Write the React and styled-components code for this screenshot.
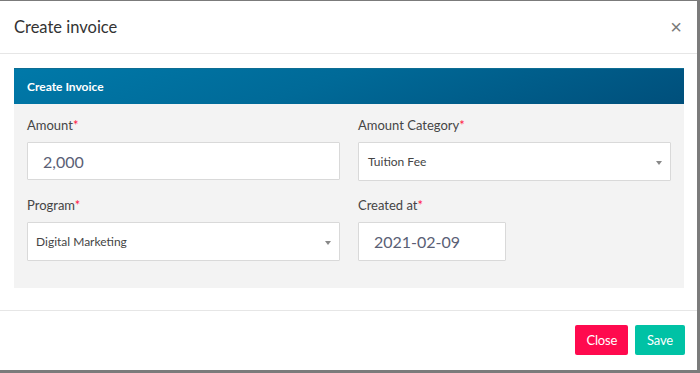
import React from "react";
import styled, { createGlobalStyle } from "styled-components";

const Global = createGlobalStyle`
  html, body { margin: 0; padding: 0; }
  body {
    background: #7b7b7b;
    font-family: "Lato", "Noto Sans", sans-serif;
    width: 700px;
    height: 373px;
    overflow: hidden;
  }
  * { box-sizing: border-box; }
`;

const Modal = styled.div`
  margin-top: 1px;
  width: 697px;
  height: 369px;
  background: #fff;
  display: flex;
  flex-direction: column;
`;

const Header = styled.div`
  height: 53px;
  border-bottom: 1px solid #e6e6e6;
  display: flex;
  align-items: center;
  justify-content: space-between;
  padding: 0 15px 0 14px;
`;

const Title = styled.h4`
  margin: 0;
  font-size: 16.5px;
  font-weight: 400;
  color: #333;
`;

const CloseX = styled.span`
  font-size: 20px;
  color: #7a7a7a;
  line-height: 1;
  font-family: "Liberation Sans", sans-serif;
`;

const Body = styled.div`
  padding: 14px 13px 22px 14px;
`;

const Card = styled.div`
  background: #f3f3f3;
`;

const CardHead = styled.div`
  height: 36px;
  display: flex;
  align-items: center;
  padding: 0 13px;
  background: linear-gradient(160deg, #0079a9 0%, #006a98 45%, #004f7b 100%);
  border-top: 1px solid #0e6d93;
  color: #fff;
  font-size: 12px;
  font-weight: 700;
`;

const CardBody = styled.div`
  padding: 12px 13px 27px 13px;
  display: grid;
  grid-template-columns: 313px 313px;
  column-gap: 18px;
  row-gap: 15px;
`;

const Field = styled.div`
  display: flex;
  flex-direction: column;
`;

const Label = styled.label`
  font-size: 13px;
  line-height: 18px;
  color: #454545;
  margin-bottom: 8px;
`;

const Star = styled.span`
  color: #ff1744;
`;

const Input = styled.div`
  height: ${(p) => p.$h || 38}px;
  width: ${(p) => (p.$w ? p.$w + "px" : "100%")};
  background: #fff;
  border: 1px solid #d9d9d9;
  border-radius: 1px;
  display: flex;
  align-items: center;
  justify-content: space-between;
  padding: 0 8px 0 ${(p) => p.$pl || 15}px;
  font-size: ${(p) => p.$fs || 16}px;
  color: ${(p) => p.$c || "#5a6075"};
`;

const Caret = styled.span`
  width: 0;
  height: 0;
  border-left: 3.5px solid transparent;
  border-right: 3.5px solid transparent;
  border-top: 4px solid #888;
  margin-top: 2px;
`;

const Footer = styled.div`
  flex: 1;
  border-top: 1px solid #e6e6e6;
  display: flex;
  align-items: center;
  justify-content: flex-end;
  gap: 7px;
  padding: 0 12px 1px 0;
`;

const Button = styled.button`
  height: 30px;
  padding: 0 ${(p) => p.$px || 12}px;
  border: none;
  border-radius: 2px;
  background: ${(p) => p.$bg};
  color: #fff;
  font-family: "Lato", sans-serif;
  font-size: 13px;
  letter-spacing: -0.2px;
`;

export default function App() {
  return (
    <>
      <Global />
      <Modal>
        <Header>
          <Title>Create invoice</Title>
          <CloseX>×</CloseX>
        </Header>
        <Body>
          <Card>
            <CardHead>Create Invoice</CardHead>
            <CardBody>
              <Field>
                <Label>
                  Amount<Star>*</Star>
                </Label>
                <Input>2,000</Input>
              </Field>
              <Field>
                <Label>
                  Amount Category<Star>*</Star>
                </Label>
                <Input $h={39} $pl={9} $fs={12} $c="#444">
                  Tuition Fee
                  <Caret />
                </Input>
              </Field>
              <Field>
                <Label>
                  Program<Star>*</Star>
                </Label>
                <Input $h={39} $pl={8} $fs={12} $c="#444">
                  Digital Marketing
                  <Caret />
                </Input>
              </Field>
              <Field>
                <Label>
                  Created at<Star>*</Star>
                </Label>
                <Input $h={39} $w={148} $pl={15}>
                  2021-02-09
                </Input>
              </Field>
            </CardBody>
          </Card>
        </Body>
        <Footer>
          <Button $bg="#ff0a4e" $px={11}>Close</Button>
          <Button $bg="#00c2a5" $px={12}>Save</Button>
        </Footer>
      </Modal>
    </>
  );
}
